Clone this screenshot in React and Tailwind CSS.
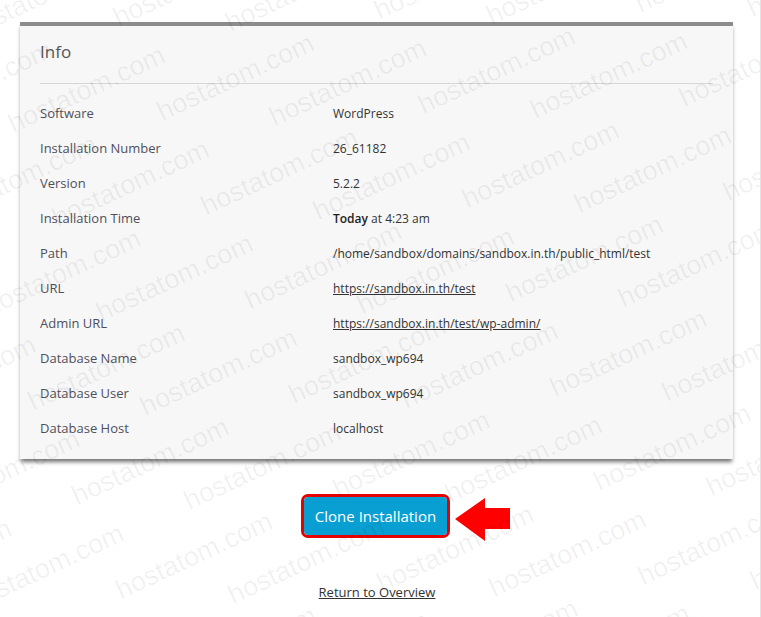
import React from "react"

const rows = [
    ["Software", "WordPress"],
    ["Installation Number", "26_61182"],
    ["Version", "5.2.2"],
    ["Installation Time", "today"],
    ["Path", "/home/sandbox/domains/sandbox.in.th/public_html/test"],
    ["URL", "https://sandbox.in.th/test", true],
    ["Admin URL", "https://sandbox.in.th/test/wp-admin/", true],
    ["Database Name", "sandbox_wp694"],
    ["Database User", "sandbox_wp694"],
    ["Database Host", "localhost"],
]

function Watermarks() {
    const lines = []
    for (let r = 0; r < 24; r++) {
        const items = []
        for (let c = 0; c < 7; c++) {
            items.push(<span key={c} className="mr-[70px]">hostatom.com</span>)
        }
        lines.push(
            <div key={r} className={"h-[52px] whitespace-nowrap " + (r % 2 ? "pl-[140px]" : "pl-0")}>
                {items}
            </div>
        )
    }
    return (
        <div className="pointer-events-none absolute inset-0 z-10 overflow-hidden">
            <div className="absolute left-[-330px] top-[-260px] w-[1500px] -rotate-[25deg] text-[27px] leading-[52px] text-black/[0.06] font-['Liberation_Sans',sans-serif]">
                {lines}
            </div>
        </div>
    )
}

export default function App() {
    return (
        <div className="relative min-h-[617px] w-full overflow-hidden bg-white border-r border-[#e3e3e3] font-['Open_Sans',sans-serif]">
            <div className="mx-[20px] mt-[22px] w-[713px] border-t-[4px] border-[#8c8c8c] bg-[#f7f7f7] px-[20px] pb-[13px] shadow-[0_4px_4px_-1px_rgba(0,0,0,0.55)]">
                <h2 className="pt-[14px] pb-[19px] text-[17px] leading-[24px] text-[#555]">Info</h2>
                <div className="h-px bg-[#d6d6d6]" />
                <div className="mt-[12px]">
                    {rows.map(([label, value, link]) => (
                        <div key={label} className="grid h-[35px] grid-cols-[293px_1fr] items-center">
                            <span className="text-[13px] text-[#4f4f5c]">{label}</span>
                            <span className="text-[12px] text-[#333]">
                                {value === "today" ? (
                                    <><b className="font-semibold text-[#222]">Today</b> at 4:23 am</>
                                ) : link ? (
                                    <a href="#" className="underline">{value}</a>
                                ) : value}
                            </span>
                        </div>
                    ))}
                </div>
            </div>

            <div className="mt-[35px] flex items-center justify-center pr-[9px]">
                <div className="relative">
                    <div className="rounded-[7px] border-[3px] border-[#e60000]">
                        <button className="h-[38px] rounded-[4px] bg-[#0a9fd2] px-[11px] text-[15px] text-white">
                            Clone Installation
                        </button>
                    </div>
                    <svg className="absolute left-[154px] top-[4px]" width="56" height="44" viewBox="0 0 56 44">
                        <polygon points="0,21 30,0 30,10 55,10 55,31 30,31 30,43" fill="#ff0000" />
                    </svg>
                </div>
            </div>

            <div className="mt-[45px] pr-[6px] text-center text-[13px] text-[#333]">
                <a href="#" className="underline">Return to Overview</a>
            </div>

            <Watermarks />
        </div>
    )
}
